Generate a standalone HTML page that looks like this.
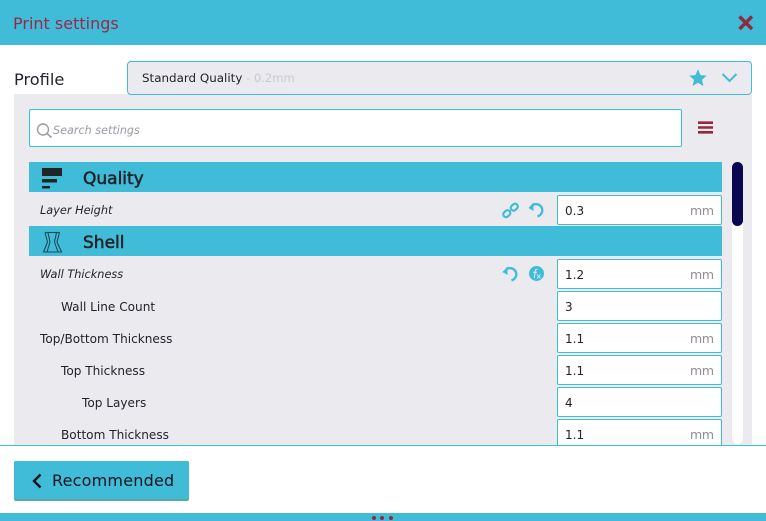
<!DOCTYPE html>
<html><head><meta charset="utf-8">
<style>
html,body{margin:0;padding:0;background:#fff;}
#r{position:relative;width:766px;height:521px;overflow:hidden;background:#fff;font-family:"DejaVu Sans","Liberation Sans",sans-serif;color:#23242b;}
#r div,#r svg{position:absolute;}
.t{white-space:nowrap;line-height:1;}
.in{left:557px;width:163px;height:28px;background:#fff;border:1px solid #40bcd8;border-radius:2px;}
.v{left:565px;font-size:12px;white-space:nowrap;line-height:1;color:#23242b;}
.u{left:690px;font-size:12.5px;letter-spacing:-.3px;white-space:nowrap;line-height:1;color:#8d8e95;}
.l{font-size:12.1px;white-space:nowrap;line-height:1;color:#23242b;}
.i{font-style:italic;font-size:11.3px;}
.hd{left:29px;width:693px;height:30px;background:#40bcd8;}
.ht{left:83px;font-size:17px;-webkit-text-stroke:.55px #23242b;white-space:nowrap;line-height:1;color:#23242b;}
</style></head><body>
<div id="r">
<div style="left:0;top:0;width:766px;height:45px;background:#40bcd8"></div>
<div class="t" style="left:13px;top:16px;font-size:16px;color:#962a44">Print settings</div>
<svg style="left:737px;top:14px" width="18" height="18" viewBox="0 0 18 18"><path d="M2.500 2.500L15 15M15 2.500L2.500 15" stroke="#8f2a40" stroke-width="3.400" fill="none"/></svg>

<div class="t" style="left:14px;top:72px;font-size:16.200px;color:#23242b">Profile</div>
<div style="left:14px;top:94px;width:738px;height:351px;background:#eaeaef"></div>
<div style="left:127px;top:61px;width:623px;height:32px;background:#eaeaef;border:1px solid #40bcd8;border-radius:4px"></div>
<div class="t" style="left:142px;top:73px;font-size:11.900px;color:#23242b">Standard Quality <span style="color:#c9cad1;font-size:11.500px">- 0.2mm</span></div>
<svg style="left:688px;top:68px" width="20" height="20" viewBox="0 0 20 20"><path d="M10 1.200L12.500 7.100L18.700 7.600L14 11.700L15.400 18L10 14.700L4.600 18L6 11.700L1.300 7.600L7.500 7.100Z" fill="#40bcd8"/></svg>
<svg style="left:721px;top:72px" width="17" height="12" viewBox="0 0 17 12"><path d="M1.500 2L8.500 9L15.500 2" stroke="#40bcd8" stroke-width="2" fill="none"/></svg>

<div style="left:29px;top:109px;width:651px;height:36px;background:#fff;border:1px solid #40bcd8;border-radius:2px"></div>
<svg style="left:36px;top:122px" width="17" height="17" viewBox="0 0 17 17"><circle cx="7" cy="7.500" r="5.500" stroke="#9c9da3" stroke-width="1.400" fill="none"/><path d="M11 11.500L15.500 15.500" stroke="#9c9da3" stroke-width="1.600" fill="none"/></svg>
<div class="t" style="left:53px;top:125px;font-size:11.200px;font-style:italic;color:#9a9ba2">Search settings</div>
<svg style="left:698px;top:121px" width="15" height="14" viewBox="0 0 15 14"><path d="M0 1.700h15M0 6.500h15M0 11.300h15" stroke="#8f2a40" stroke-width="2.600" fill="none"/></svg>

<div class="hd" style="top:162px"></div>
<svg style="left:41px;top:168px" width="22" height="22" viewBox="0 0 22 22"><path d="M1 0h20v8H1zM1 11h15v3.500H1zM1 18h8v2.500H1z" fill="#222327"/></svg>
<div class="ht" style="top:171px">Quality</div>
<div class="l i" style="left:40px;top:205px">Layer Height</div>
<svg style="left:502px;top:202px" width="17" height="17" viewBox="0 0 17 17"><g stroke="#40bcd8" stroke-width="2.200" fill="none"><rect x="1" y="9" width="7.500" height="5.500" rx="2.700" transform="rotate(-42 4.700 11.700)"/><rect x="8.500" y="2.500" width="7.500" height="5.500" rx="2.700" transform="rotate(-42 12.200 5.200)"/></g></svg>
<svg style="left:528px;top:201px" width="18" height="18" viewBox="0 0 18 18"><path d="M4.500 4.200A6.200 6.200 0 1 1 9.500 15.300" stroke="#40bcd8" stroke-width="2.400" fill="none"/><path d="M0.500 7L5.500 1.500L5.500 10Z" fill="#40bcd8"/></svg>
<div class="in" style="top:195px"></div><div class="v" style="top:205px">0.3</div><div class="u" style="top:205px">mm</div>

<div class="hd" style="top:226px"></div>
<svg style="left:41px;top:230px" width="23" height="24" viewBox="0 0 23 24"><g stroke="#1f4a5c" stroke-width="1.100" fill="none"><path d="M4 2.500h14.500"/><path d="M4 2.500L6.500 12L2.500 22h18L16 12L18.500 2.500"/><path d="M7 2.500L9 12L6 22M15.500 2.500L13.500 12L17 22"/></g></svg>
<div class="ht" style="top:235px">Shell</div>

<div class="l i" style="left:40px;top:269px">Wall Thickness</div>
<svg style="left:502px;top:265px" width="18" height="18" viewBox="0 0 18 18"><path d="M4.500 4.200A6.200 6.200 0 1 1 9.500 15.300" stroke="#40bcd8" stroke-width="2.400" fill="none"/><path d="M0.500 7L5.500 1.500L5.500 10Z" fill="#40bcd8"/></svg>
<svg style="left:529px;top:266px" width="15" height="15" viewBox="0 0 15 15"><circle cx="7.500" cy="7.500" r="7.500" fill="#40bcd8"/><path d="M8.500 3.300C7 2.900 6.500 3.800 6.300 5L5.300 12M4 6.200h4" stroke="#eaeaef" stroke-width="1" fill="none"/><path d="M8 8.500L11.500 12.500M11.500 8.500L8 12.500" stroke="#eaeaef" stroke-width=".9" fill="none"/></svg>
<div class="in" style="top:259px"></div><div class="v" style="top:269px">1.2</div><div class="u" style="top:269px">mm</div>

<div class="l" style="left:61px;top:301px">Wall Line Count</div>
<div class="in" style="top:291px"></div><div class="v" style="top:301px">3</div>

<div class="l" style="left:40px;top:333px">Top/Bottom Thickness</div>
<div class="in" style="top:323px"></div><div class="v" style="top:333px">1.1</div><div class="u" style="top:333px">mm</div>

<div class="l" style="left:61px;top:365px">Top Thickness</div>
<div class="in" style="top:355px"></div><div class="v" style="top:365px">1.1</div><div class="u" style="top:365px">mm</div>

<div class="l" style="left:82px;top:397px">Top Layers</div>
<div class="in" style="top:387px"></div><div class="v" style="top:397px">4</div>

<div class="l" style="left:61px;top:429px">Bottom Thickness</div>
<div class="in" style="top:419px"></div><div class="v" style="top:429px">1.1</div><div class="u" style="top:429px">mm</div>

<div style="left:732px;top:162px;width:11px;height:282px;background:#fff;border-radius:5.500px"></div>
<div style="left:732px;top:162px;width:11px;height:64px;background:#0a0650;border-radius:5.500px"></div>

<div style="left:0;top:446px;width:766px;height:75px;background:#fff"></div>
<div style="left:0;top:445px;width:766px;height:1px;background:#40bcd8"></div>

<div style="left:14px;top:461px;width:175px;height:40px;background:#4fae9f;border-radius:2px"></div>
<div style="left:14px;top:461px;width:175px;height:38px;background:#40bcd8;border-radius:2px"></div>
<svg style="left:31px;top:473px" width="12" height="16" viewBox="0 0 12 16"><path d="M9.500 1.500L3 8L9.500 14.500" stroke="#10131c" stroke-width="2.400" fill="none"/></svg>
<div class="t" style="left:52px;top:473px;font-size:16px;letter-spacing:.2px;color:#10131c">Recommended</div>

<div style="left:0;top:513px;width:766px;height:8px;background:#40bcd8"></div>
<div style="left:372px;top:516px;width:4px;height:4px;border-radius:50%;background:#8f2a40"></div>
<div style="left:380px;top:516px;width:4px;height:4px;border-radius:50%;background:#8f2a40"></div>
<div style="left:389px;top:516px;width:4px;height:4px;border-radius:50%;background:#8f2a40"></div>
</div>
</body></html>
